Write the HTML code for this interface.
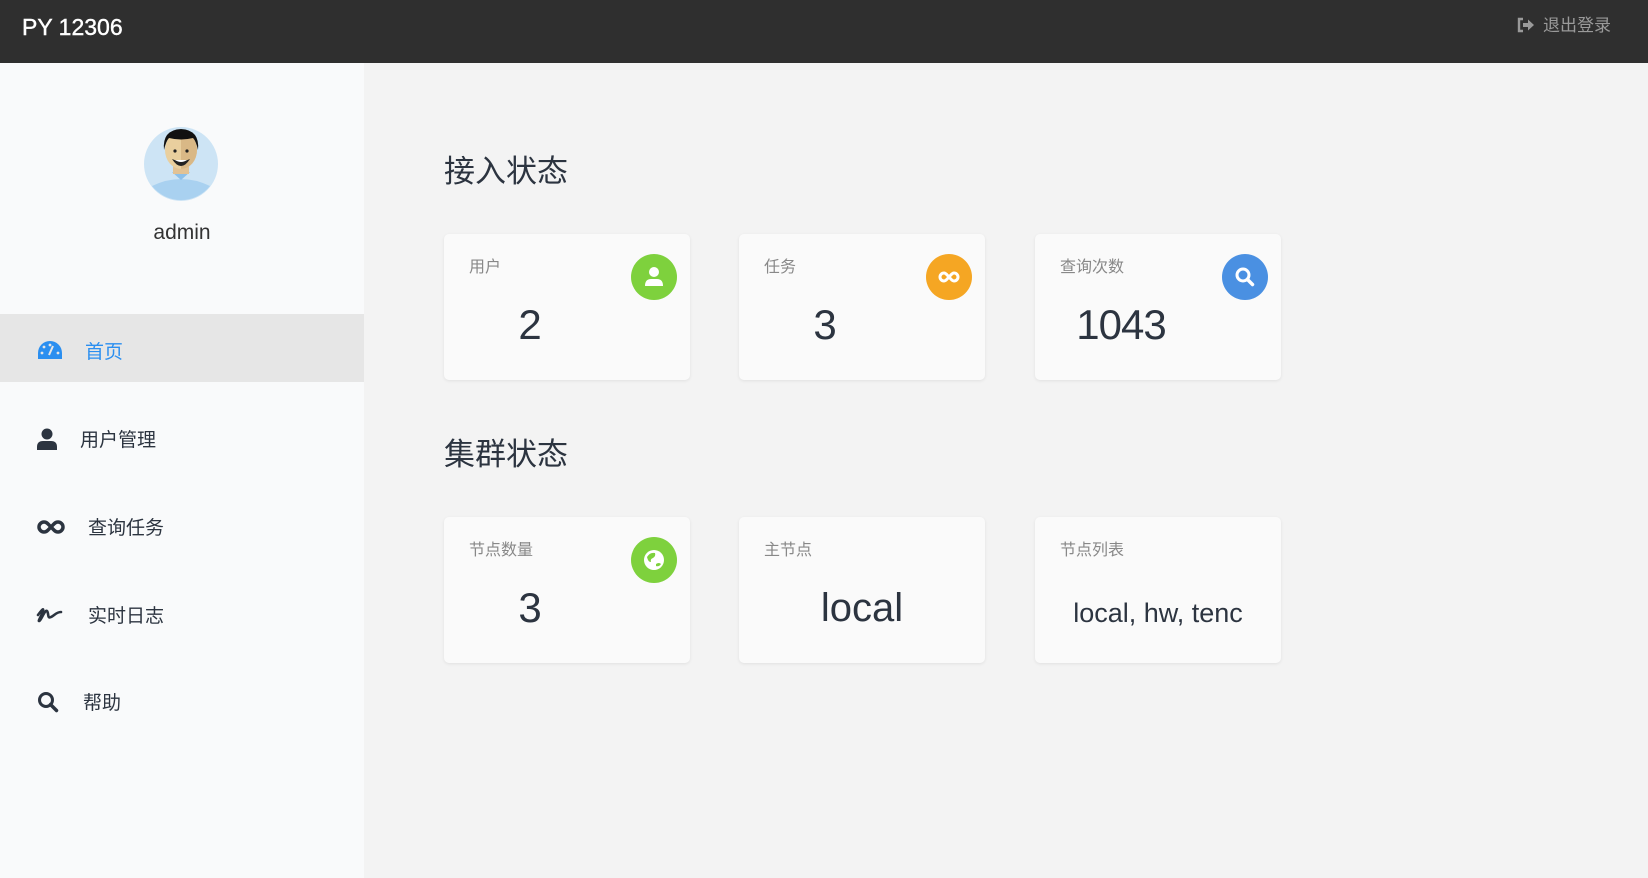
<!DOCTYPE html>
<html><head><meta charset="utf-8"><style>
*{margin:0;padding:0;box-sizing:border-box}
body{width:1648px;height:878px;overflow:hidden;background:#f3f3f3;font-family:"Liberation Sans","Noto Sans CJK SC",sans-serif;position:relative;color:#2c3440}
.hd{position:absolute;left:0;top:0;width:1648px;height:63px;background:#2f2f2f}
.logo{position:absolute;left:22px;top:12px;color:#fff;font-size:23px;line-height:30px;-webkit-text-stroke:0.4px #fff}
.out{position:absolute;left:1517px;top:14px;color:#9a9a9a;font-size:17px;line-height:24px}
.sb{position:absolute;left:0;top:63px;width:364px;height:815px;background:#f9fafb}
.av{position:absolute;left:144px;top:124px}
.name{position:absolute;left:0;width:364px;top:221px;text-align:center;font-size:21px;color:#333}
.act{position:absolute;left:0;top:314px;width:364px;height:68px;background:#e6e6e6}
.mi{position:absolute;font-size:19px;line-height:24px;color:#2c3440}
.ic{position:absolute}
h2{position:absolute;left:444px;font-size:31px;font-weight:normal;color:#2c3440;line-height:40px}
.card{position:absolute;width:246px;height:146px;background:#fafafa;border-radius:5px;box-shadow:0 1px 3px rgba(0,0,0,.08)}
.lab{position:absolute;left:25px;top:19px;font-size:16px;color:#888}
.num{position:absolute;left:0;width:172px;top:66px;text-align:center;font-size:42px;line-height:50px;color:#2c3440}
.circ{position:absolute;left:187px;top:20px;width:46px;height:46px;border-radius:50%}
</style></head><body>
<div class="hd"><div class="logo">PY 12306</div>
<div class="out"><svg width="18" height="16" viewBox="0 0 18 16" style="vertical-align:-2px;margin-right:8px"><path d="M6 2H2v12h4" fill="none" stroke="#9a9a9a" stroke-width="2.4"/><path d="M6 6h5V2.5L17 8l-6 5.5V10H6z" fill="#9a9a9a"/></svg>退出登录</div></div>
<div class="sb"></div>
<svg class="av" width="74" height="78" viewBox="0 0 74 78"><circle cx="37" cy="40" r="37" fill="#cde4f5"/><path d="M8 62q29-14 58 0a37 37 0 0 1-58 0z" fill="#a9d1f0"/><path d="M28 48h18l-9 8z" fill="#8cc0ea"/><rect x="29" y="40" width="16" height="10" fill="#e2c294"/><ellipse cx="37" cy="26" rx="16" ry="19" fill="#e9cf9e"/><path d="M37 7v38a16 19 0 0 0 0-38" fill="#d9b886"/><path d="M20 26q-2-20 17-21q19 1 17 21q-2-9-5-12q-12 3-24 0q-3 3-5 12z" fill="#111"/><circle cx="31" cy="27" r="1.6" fill="#222"/><circle cx="43" cy="27" r="1.6" fill="#222"/><path d="M28 35q9 14 18 0q-9 4-18 0z" fill="#222"/><path d="M31 36q6 4 12 0z" fill="#fff"/></svg>
<div class="name">admin</div>
<div class="act"></div>
<svg class="ic" style="left:37px;top:340px" width="26" height="20" viewBox="0 0 26 20"><path d="M13 1A12 12 0 0 0 1 13v6h24v-6A12 12 0 0 0 13 1z" fill="#2b8ff0"/><circle cx="5" cy="13" r="1.4" fill="#e6e6e6"/><circle cx="7" cy="7" r="1.4" fill="#e6e6e6"/><circle cx="13" cy="5" r="1.4" fill="#e6e6e6"/><circle cx="21" cy="13" r="1.4" fill="#e6e6e6"/><path d="M12 15l4-9" stroke="#e6e6e6" stroke-width="2"/></svg>
<div class="mi" style="left:85px;top:341px;color:#2b8ff0">首页</div>
<svg class="ic" style="left:37px;top:428px" width="20" height="22" viewBox="0 0 20 22"><circle cx="10" cy="6" r="5.5" fill="#2c3440"/><path d="M0 22v-3q0-6 6-6h8q6 0 6 6v3z" fill="#2c3440"/></svg>
<div class="mi" style="left:80px;top:429px">用户管理</div>
<svg class="ic" style="left:36px;top:519px" width="30" height="16" viewBox="0 0 30 16"><path d="M8 3a5 5 0 1 0 0 10c3 0 4-2 7-5c3-3 4-5 7-5a5 5 0 1 1 0 10c-3 0-4-2-7-5c-3-3-4-5-7-5z" fill="none" stroke="#2c3440" stroke-width="3.5"/></svg>
<div class="mi" style="left:88px;top:517px">查询任务</div>
<svg class="ic" style="left:36px;top:605px" width="30" height="18" viewBox="0 0 30 18"><path d="M2 10c3-4 6-8 5-4c-1 4-5 10-4 10c2 0 6-12 8-10c2 2 0 8 4 6c3-1 5-5 10-5" fill="none" stroke="#2c3440" stroke-width="2.6" stroke-linecap="round"/></svg>
<div class="mi" style="left:88px;top:605px">实时日志</div>
<svg class="ic" style="left:37px;top:691px" width="22" height="22" viewBox="0 0 22 22"><circle cx="9" cy="9" r="6.5" fill="none" stroke="#2c3440" stroke-width="3"/><path d="M13.5 13.5l6 6" stroke="#2c3440" stroke-width="3.5" stroke-linecap="round"/></svg>
<div class="mi" style="left:83px;top:692px">帮助</div>

<h2 style="top:152px">接入状态</h2>
<h2 style="top:435px">集群状态</h2>

<div class="card" style="left:444px;top:234px"><div class="lab">用户</div><div class="circ" style="background:#7ed13d"><svg width="46" height="46" viewBox="0 0 46 46"><circle cx="23" cy="18" r="5" fill="#fff"/><path d="M14 32q0-7 6-7h6q6 0 6 7z" fill="#fff"/></svg></div><div class="num">2</div></div>
<div class="card" style="left:739px;top:234px"><div class="lab">任务</div><div class="circ" style="background:#f5a623"><svg width="46" height="46" viewBox="0 0 46 46"><path d="M18 19a4 4 0 1 0 0 8c2 0 3-2 5-4c2-2 3-4 5-4a4 4 0 1 1 0 8c-2 0-3-2-5-4c-2-2-3-4-5-4z" fill="none" stroke="#fff" stroke-width="3"/></svg></div><div class="num">3</div></div>
<div class="card" style="left:1035px;top:234px"><div class="lab">查询次数</div><div class="circ" style="background:#4a90e2"><svg width="46" height="46" viewBox="0 0 46 46"><circle cx="21" cy="21" r="6" fill="none" stroke="#fff" stroke-width="3"/><path d="M25.5 25.5l5 5" stroke="#fff" stroke-width="3.5" stroke-linecap="round"/></svg></div><div class="num" style="letter-spacing:-1px">1043</div></div>

<div class="card" style="left:444px;top:517px"><div class="lab">节点数量</div><div class="circ" style="background:#7ed13d"><svg width="46" height="46" viewBox="0 0 46 46"><circle cx="23" cy="23" r="10" fill="#fff"/><path d="M16 20q3-5 8-4q1 3-2 5q-3 1-2 4q-3 0-4-5zM25 27q3-2 5 0q-2 3-5 2z" fill="#7ed13d"/></svg></div><div class="num">3</div></div>
<div class="card" style="left:739px;top:517px"><div class="lab">主节点</div><div class="num" style="width:246px;font-size:40px">local</div></div>
<div class="card" style="left:1035px;top:517px"><div class="lab">节点列表</div><div class="num" style="width:246px;font-size:27px;top:71px">local, hw, tenc</div></div>
</body></html>
